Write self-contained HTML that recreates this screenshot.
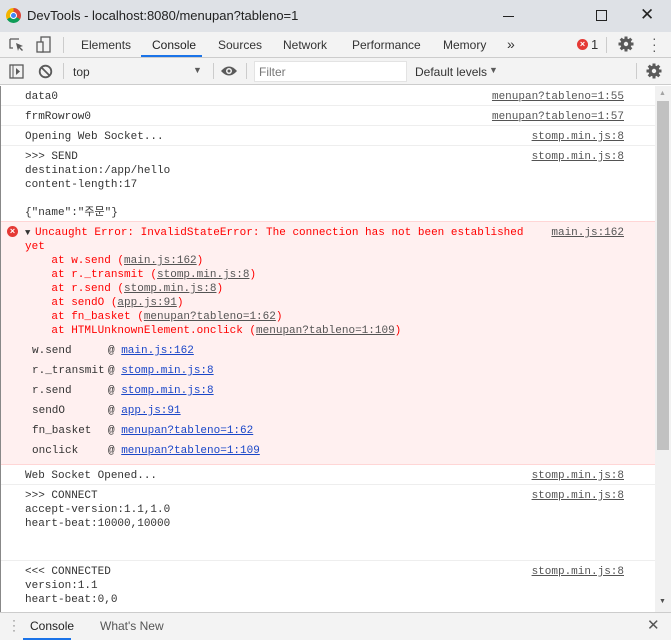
<!DOCTYPE html>
<html><head><meta charset="utf-8"><style>
*{margin:0;padding:0;box-sizing:border-box}
body{width:671px;height:640px;overflow:hidden;background:#fff;position:relative;font-family:"Liberation Sans","Noto Sans CJK KR",sans-serif;font-size:12px;color:#333}
.a{position:absolute;white-space:pre}
.m{font-family:"Liberation Mono","Noto Sans CJK KR",monospace;font-size:11px;line-height:14px;margin-top:1px}
.ln{position:absolute;left:1px;width:654px;height:1px;background:#eee}
.r{right:47px;text-decoration:underline;color:#545454}
.e{color:#f00}
.u{text-decoration:underline;color:#545454}
.b{text-decoration:underline;color:#1a47c8}
</style></head><body>
<div class="a" style="left:0;top:0;width:671px;height:32px;background:#dee1e6"></div>
<div class="a" style="left:6px;top:8px;width:15px;height:15px;border-radius:50%;background:conic-gradient(#db4437 0 120deg,#0f9d58 120deg 240deg,#f4b400 240deg 360deg)"></div>
<div class="a" style="left:10px;top:12px;width:7px;height:7px;border-radius:50%;background:#4285f4;border:1.5px solid #fff"></div>
<div class="a" style="left:27px;top:8px;font-size:13px;color:#222">DevTools - localhost:8080/menupan?tableno=1</div>
<div class="a" style="left:503px;top:16px;width:11px;height:1px;background:#222"></div>
<div class="a" style="left:596px;top:10px;width:11px;height:11px;border:1px solid #222"></div>
<div class="a" style="left:640px;top:5px;font-size:17px;color:#222">✕</div>
<div class="a" style="left:0;top:32px;width:671px;height:26px;background:#f3f3f3;border-bottom:1px solid #ccc"></div>
<svg class="a" style="left:9px;top:37px" width="16" height="16"><path d="M1 2h9M1 2v9h3" stroke="#5a5a5a" fill="none" stroke-width="1.3"/><path d="M7 6l7 3-3 1 3 3-1 1-3-3-1 3z" fill="#5a5a5a"/></svg>
<svg class="a" style="left:36px;top:36px" width="16" height="18"><rect x="5" y="1" width="9" height="15" fill="none" stroke="#5a5a5a" stroke-width="1.3"/><rect x="1" y="6" width="6" height="10" fill="#f3f3f3" stroke="#5a5a5a" stroke-width="1.3"/></svg>
<div class="a" style="left:63px;top:37px;width:1px;height:16px;background:#ccc"></div>
<div class="a" style="left:81px;top:38px;color:#333">Elements</div>
<div class="a" style="left:152px;top:38px;color:#222">Console</div>
<div class="a" style="left:141px;top:55px;width:61px;height:2px;background:#1a73e8"></div>
<div class="a" style="left:218px;top:38px">Sources</div>
<div class="a" style="left:283px;top:38px">Network</div>
<div class="a" style="left:352px;top:38px">Performance</div>
<div class="a" style="left:443px;top:38px">Memory</div>
<div class="a" style="left:507px;top:36px;font-size:14px">»</div>
<div class="a" style="left:577px;top:39px;width:11px;height:11px;border-radius:50%;background:#e53935;color:#fff;font-size:9px;line-height:11px;text-align:center;font-weight:bold">×</div>
<div class="a" style="left:591px;top:37px;font-size:13px">1</div>
<div class="a" style="left:606px;top:37px;width:1px;height:16px;background:#ccc"></div>
<svg class="a" style="left:618px;top:36px" width="16" height="16"><circle cx="8" cy="8" r="5.5" fill="#5a5a5a"/><path d="M8 0.5v15M0.5 8h15M2.7 2.7l10.6 10.6M13.3 2.7L2.7 13.3" stroke="#5a5a5a" stroke-width="3"/><circle cx="8" cy="8" r="2.2" fill="#f3f3f3"/></svg>
<div class="a" style="left:652px;top:35px;font-size:14px;color:#5a5a5a;line-height:6px">·<br>·<br>·</div>
<div class="a" style="left:0;top:58px;width:671px;height:27px;background:#f3f3f3;border-bottom:1px solid #ccc"></div>
<svg class="a" style="left:9px;top:64px" width="15" height="15"><rect x="1" y="1" width="13" height="13" fill="none" stroke="#5a5a5a" stroke-width="1.3"/><path d="M4 1v13" stroke="#5a5a5a"/><path d="M7 4l4 3.5-4 3.5z" fill="#5a5a5a"/></svg>
<svg class="a" style="left:38px;top:64px" width="15" height="15"><circle cx="7.5" cy="7.5" r="5.8" fill="none" stroke="#5a5a5a" stroke-width="1.8"/><path d="M3.5 3.5l8 8" stroke="#5a5a5a" stroke-width="1.8"/></svg>
<div class="a" style="left:63px;top:63px;width:1px;height:16px;background:#ccc"></div>
<div class="a" style="left:73px;top:65px">top</div>
<div class="a" style="left:193px;top:65px;font-size:9px;color:#5a5a5a">▼</div>
<div class="a" style="left:213px;top:63px;width:1px;height:16px;background:#ccc"></div>
<svg class="a" style="left:220px;top:64px" width="18" height="14"><path d="M1 7Q9-2 17 7Q9 16 1 7z" fill="#5a5a5a"/><circle cx="9" cy="7" r="3" fill="#f3f3f3"/><circle cx="9" cy="7" r="1.5" fill="#5a5a5a"/></svg>
<div class="a" style="left:246px;top:63px;width:1px;height:16px;background:#ccc"></div>
<div class="a" style="left:254px;top:61px;width:153px;height:21px;background:#fff;border:1px solid #e3e3e3"></div>
<div class="a" style="left:259px;top:65px;color:#777">Filter</div>
<div class="a" style="left:415px;top:65px">Default levels</div>
<div class="a" style="left:489px;top:65px;font-size:9px;color:#5a5a5a">▼</div>
<div class="a" style="left:636px;top:63px;width:1px;height:16px;background:#ccc"></div>
<svg class="a" style="left:646px;top:63px" width="16" height="16"><circle cx="8" cy="8" r="5.5" fill="#5a5a5a"/><path d="M8 0.5v15M0.5 8h15M2.7 2.7l10.6 10.6M13.3 2.7L2.7 13.3" stroke="#5a5a5a" stroke-width="3"/><circle cx="8" cy="8" r="2.2" fill="#f3f3f3"/></svg>
<div class="a" style="left:0;top:86px;width:1px;height:526px;background:#888"></div>
<div class="a" style="left:655px;top:86px;width:16px;height:526px;background:#f1f1f1"></div>
<div class="a" style="left:657px;top:101px;width:12px;height:349px;background:#c1c1c1"></div>
<div class="a" style="left:659px;top:90px;font-size:7px;color:#a3a3a3">▲</div>
<div class="a" style="left:659px;top:598px;font-size:7px;color:#505050">▼</div>
<div class="a m" style="left:25px;top:89px">data0</div><div class="a m r" style="top:89px">menupan?tableno=1:55</div>
<div class="ln" style="top:105px"></div>
<div class="a m" style="left:25px;top:109px">frmRowrow0</div><div class="a m r" style="top:109px">menupan?tableno=1:57</div>
<div class="ln" style="top:125px"></div>
<div class="a m" style="left:25px;top:129px">Opening Web Socket...</div><div class="a m r" style="top:129px">stomp.min.js:8</div>
<div class="ln" style="top:145px"></div>
<div class="a m" style="left:25px;top:149px">&gt;&gt;&gt; SEND
destination:/app/hello
content-length:17

{"name":"주문"}</div><div class="a m r" style="top:149px">stomp.min.js:8</div>
<div class="a" style="left:1px;top:221px;width:654px;height:244px;background:#fff0f0;border-top:1px solid #ffd6d6;border-bottom:1px solid #ffd6d6"></div>
<div class="a" style="left:7px;top:226px;width:11px;height:11px;border-radius:50%;background:#e53935;color:#fff;font-size:9px;line-height:11px;text-align:center;font-weight:bold">×</div>
<div class="a m" style="left:25px;top:225px;color:#333;font-size:9px">▼</div>
<div class="a m e" style="left:35px;top:225px">Uncaught Error: InvalidStateError: The connection has not been established</div>
<div class="a m e" style="left:25px;top:239px">yet</div>
<div class="a m r" style="top:225px">main.js:162</div>
<div class="a m e" style="left:25px;top:253px">    at w.send (<span class="u">main.js:162</span>)
    at r._transmit (<span class="u">stomp.min.js:8</span>)
    at r.send (<span class="u">stomp.min.js:8</span>)
    at sendO (<span class="u">app.js:91</span>)
    at fn_basket (<span class="u">menupan?tableno=1:62</span>)
    at HTMLUnknownElement.onclick (<span class="u">menupan?tableno=1:109</span>)</div>
<div class="a m" style="left:32px;top:340px;line-height:20px">w.send
r._transmit
r.send
sendO
fn_basket
onclick</div>
<div class="a m" style="left:108px;top:340px;line-height:20px">@ <span class="b">main.js:162</span>
@ <span class="b">stomp.min.js:8</span>
@ <span class="b">stomp.min.js:8</span>
@ <span class="b">app.js:91</span>
@ <span class="b">menupan?tableno=1:62</span>
@ <span class="b">menupan?tableno=1:109</span></div>
<div class="a m" style="left:25px;top:468px">Web Socket Opened...</div><div class="a m r" style="top:468px">stomp.min.js:8</div>
<div class="ln" style="top:484px"></div>
<div class="a m" style="left:25px;top:488px">&gt;&gt;&gt; CONNECT
accept-version:1.1,1.0
heart-beat:10000,10000</div><div class="a m r" style="top:488px">stomp.min.js:8</div>
<div class="ln" style="top:560px"></div>
<div class="a m" style="left:25px;top:564px">&lt;&lt;&lt; CONNECTED
version:1.1
heart-beat:0,0</div><div class="a m r" style="top:564px">stomp.min.js:8</div>
<div class="a" style="left:0;top:612px;width:671px;height:28px;background:#f3f3f3;border-top:1px solid #ccc"></div>
<div class="a" style="left:12px;top:618px;font-size:12px;line-height:5px;color:#777">·<br>·<br>·</div>
<div class="a" style="left:30px;top:619px;color:#222">Console</div>
<div class="a" style="left:23px;top:638px;width:48px;height:2px;background:#1a73e8"></div>
<div class="a" style="left:100px;top:619px;color:#555">What's New</div>
<div class="a" style="left:647px;top:616px;font-size:15px;color:#555">✕</div>
</body></html>
